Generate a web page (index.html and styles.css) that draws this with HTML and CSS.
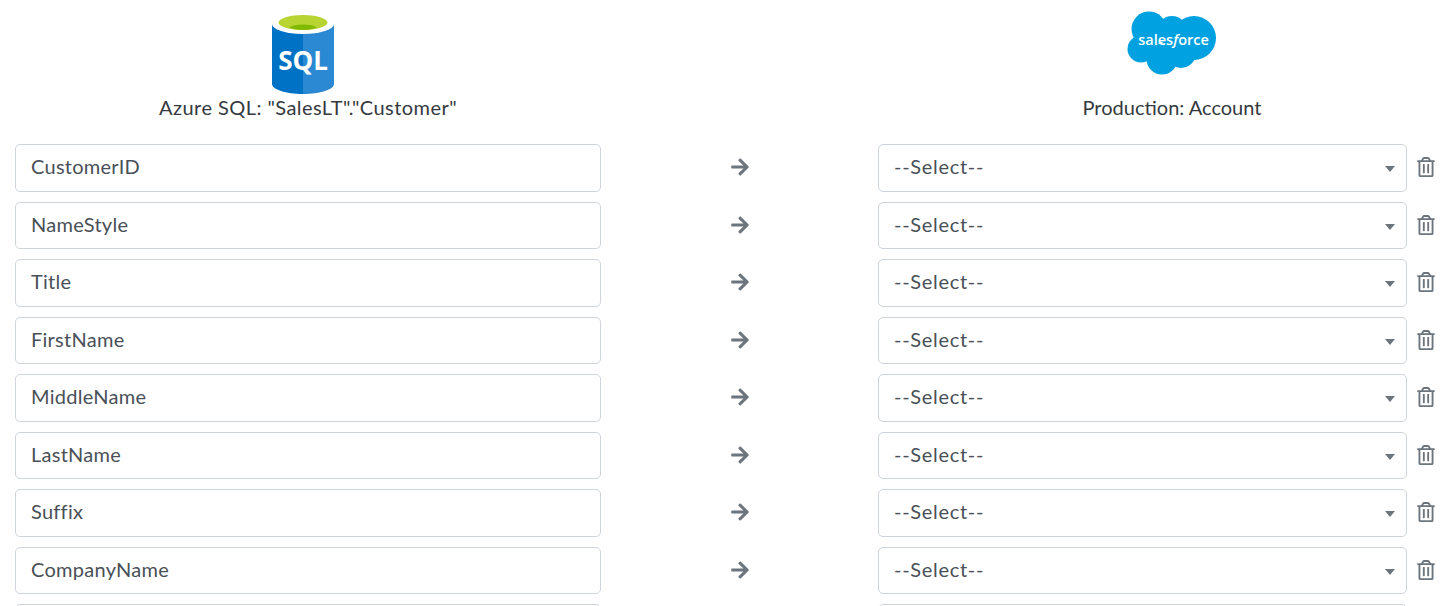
FILE: index.html
```html
<!DOCTYPE html>
<html lang="en">
<head>
    <meta charset="UTF-8">
    <title>Field Mapping</title>
    <link rel="stylesheet" href="styles.css">
</head>
<body>
    <svg class="icon-defs" width="0" height="0">
        <symbol id="arrow" viewBox="0 0 448 512"><path d="M190.5 66.9l22.2-22.2c9.4-9.4 24.6-9.4 33.9 0L441 239c9.4 9.4 9.4 24.6 0 33.9L246.6 467.3c-9.4 9.4-24.6 9.4-33.9 0l-22.2-22.2c-9.5-9.5-9.3-25 .4-34.3L311.4 296H24c-13.3 0-24-10.7-24-24v-32c0-13.3 10.7-24 24-24h287.4L190.9 101.2c-9.8-9.3-10-24.8-.4-34.3z"/></symbol>
        <symbol id="trash" viewBox="0 0 448 512"><path d="M268 416h24a12 12 0 0 0 12-12V188a12 12 0 0 0-12-12h-24a12 12 0 0 0-12 12v216a12 12 0 0 0 12 12zM432 80h-82.41l-34-56.7A48 48 0 0 0 274.41 0H173.59a48 48 0 0 0-41.16 23.3L98.41 80H16A16 16 0 0 0 0 96v16a16 16 0 0 0 16 16h16v336a48 48 0 0 0 48 48h288a48 48 0 0 0 48-48V128h16a16 16 0 0 0 16-16V96a16 16 0 0 0-16-16zM171.84 50.91A6 6 0 0 1 177 48h94a6 6 0 0 1 5.15 2.91L293.61 80H154.39zM368 464H80V128h288zm-212-48h24a12 12 0 0 0 12-12V188a12 12 0 0 0-12-12h-24a12 12 0 0 0-12 12v216a12 12 0 0 0 12 12z"/></symbol>
    </svg>

    <div class="mapping">
        <!-- Headers -->
        <div class="mapping-head">
            <div class="source-head">
                <svg class="logo sql-logo" width="62" height="80" viewBox="0 0 62 80">
                    <path fill="#0072c6" d="M0 10v60c0 5.500 13.900 10 31 10V10z"/>
                    <path fill="#2b88d2" d="M62 10v60c0 5.500-13.900 10-31 10V10z"/>
                    <ellipse cx="31" cy="10" rx="31" ry="10" fill="#fff"/>
                    <ellipse cx="31" cy="8.500" rx="24.500" ry="7.500" fill="#b8d432"/>
                    <path fill="#7fba00" d="M17 13.500c3-2 8-3 14-3s11 1 14 3c-4 1.600-9 2.500-14 2.500s-10-.9-14-2.500z"/>
                    <text class="sql-text" x="31" y="56" text-anchor="middle">SQL</text>
                </svg>
                <div class="head-label">Azure SQL: "SalesLT"."Customer"</div>
            </div>
            <div></div>
            <div class="target-head">
                <svg class="logo" width="90" height="64" viewBox="0 0 90 64">
                    <g fill="#00a1e0">
                        <circle cx="22" cy="18" r="17.500"/>
                        <circle cx="45" cy="20" r="15"/>
                        <circle cx="67" cy="27" r="22"/>
                        <circle cx="14" cy="38" r="13.500"/>
                        <circle cx="35" cy="48" r="15.500"/>
                        <circle cx="54" cy="42" r="15"/>
                    </g>
                    <text class="sf-text" x="46.500" y="34" text-anchor="middle">sales<tspan font-style="italic">f</tspan>orce</text>
                </svg>
                <div class="head-label">Production: Account</div>
            </div>
        </div>

        <!-- Rows -->
        <div class="mapping-rows" id="rows"></div>
    </div>

    <script>
        const rowsDiv = document.getElementById('rows');
        const fields = ["CustomerID", "NameStyle", "Title", "FirstName", "MiddleName", "LastName", "Suffix", "CompanyName", ""];
        fields.forEach(name => {
            // last row is below the fold, only its top border shows
            const selectLabel = name ? "--Select--" : "";
            const row = document.createElement('div');
            row.classList.add('mapping-row');
            row.innerHTML = `
                <div class="source-cell"><div class="field">${name}</div></div>
                <div class="arrow-cell">${name ? '<svg class="arrow-icon"><use href="#arrow"/></svg>' : ''}</div>
                <div class="target-cell">
                    <div class="field select-field">${selectLabel}<span class="caret"></span></div>
                    ${name ? '<svg class="trash-icon"><use href="#trash"/></svg>' : ''}
                </div>`;
            rowsDiv.appendChild(row);
        });
    </script>
</body>
</html>
```
FILE: styles.css
```css
/* Global Styling */
html, body {
    height: 100%;
    overflow: hidden;
}
body {
    margin: 0;
    background-color: #fff;
    color: #3a3f44;
    font-family: "Lato", "Noto Sans", sans-serif;
}
.icon-defs {
    position: absolute;
}
.mapping {
    width: 1481px;
}
/* Headers */
.mapping-head {
    display: grid;
    grid-template-columns: 616px 247px 618px;
    height: 144px;
}
.source-head,
.target-head {
    display: flex;
    flex-direction: column;
    align-items: center;
}
.source-head {
    padding-top: 14px;
}
.source-head .head-label {
    letter-spacing: 0.45px;
}
.target-head {
    padding-top: 11px;
}
.target-head .head-label {
    margin-top: 19px;
}
.logo {
    display: block;
    flex: none;
}
.sql-logo {
    margin-right: 10px;
}
.head-label {
    font-size: 20px;
    line-height: 26px;
    color: #343a40;
}
.sql-text {
    fill: #fff;
    font-family: "Open Sans", sans-serif;
    font-weight: 700;
    font-size: 26px;
}
.sf-text {
    fill: #fff;
    font-family: "Open Sans", sans-serif;
    font-weight: 600;
    font-size: 14.500px;
}
/* Rows */
.mapping-rows {
    display: flex;
    flex-direction: column;
    gap: 10px;
}
.mapping-row {
    display: grid;
    grid-template-columns: 616px 247px 618px;
    height: 47.500px;
}
.source-cell {
    padding: 0 15px;
}
.arrow-cell {
    display: flex;
    align-items: center;
    justify-content: center;
}
.target-cell {
    display: flex;
    align-items: center;
    padding-left: 15px;
}
.field {
    box-sizing: border-box;
    height: 100%;
    padding: 0 15px 3px;
    border: 1px solid #ced4da;
    border-radius: 5px;
    display: flex;
    align-items: center;
    font-size: 20px;
    letter-spacing: 0.27px;
    color: #495057;
}
.select-field {
    position: relative;
    width: 529px;
    flex: none;
    letter-spacing: 0.7px;
}
.caret {
    position: absolute;
    right: 11px;
    top: 21px;
    border-left: 5px solid transparent;
    border-right: 5px solid transparent;
    border-top: 6px solid #6c757d;
}
.arrow-icon {
    width: 18px;
    height: 20px;
    margin-bottom: 1px;
    fill: #6c757d;
}
.trash-icon {
    width: 18px;
    height: 20px;
    margin-left: 10px;
    margin-bottom: 1px;
    fill: #6c757d;
}
```
